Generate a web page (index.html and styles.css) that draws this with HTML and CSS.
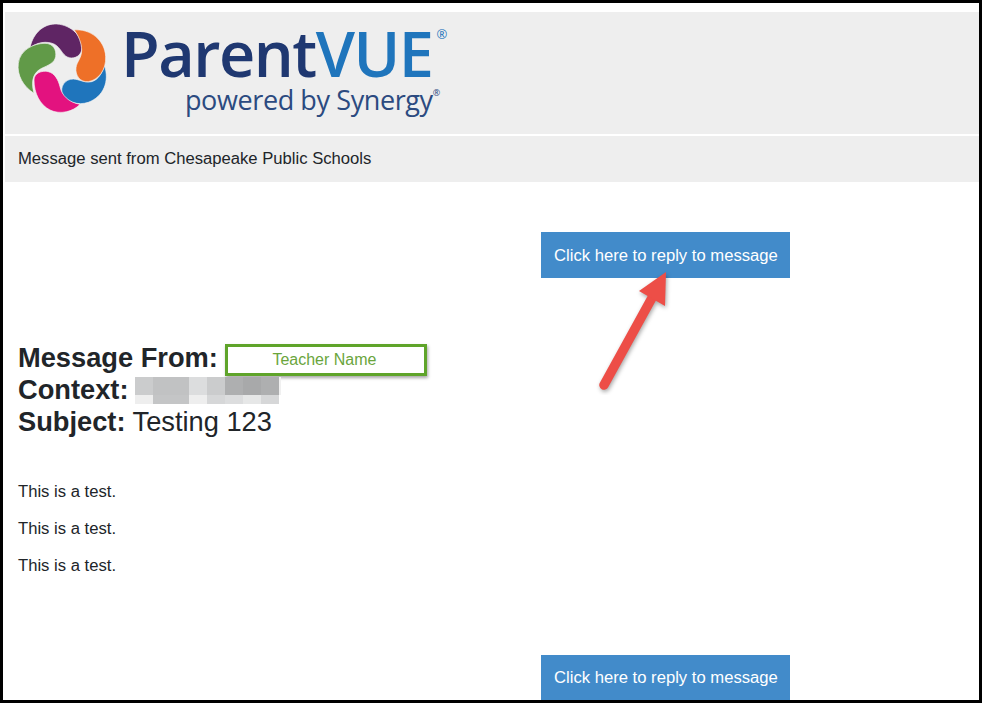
FILE: index.html
```html
<!DOCTYPE html>
<html lang="en">
<head>
    <meta charset="UTF-8">
    <title>ParentVUE Message</title>
    <link rel="stylesheet" href="styles.css">
</head>
<body>
    <div class="frame">
        <div class="logo-bar">
            <svg class="logo-mark" viewBox="0 0 330 315" width="110" height="105">
                <path class="petal" fill="#5f2564" d="M60 98 C70 50 105 25 140 27 C185 30 218 65 216 100 C214 122 195 132 178 128 C160 124 155 105 140 92 C125 80 90 75 60 98Z"/>
                <path class="petal" fill="#1f75bc" d="M283 150 C300 200 280 245 235 262 C205 272 170 262 158 240 C148 215 165 192 190 192 C205 192 225 205 245 200 C265 195 278 172 283 150Z"/>
                <path class="petal" fill="#ee7028" d="M192 45 C240 40 285 75 287 125 C289 165 265 195 235 200 C210 203 195 180 198 158 C200 140 215 130 215 105 C215 85 205 60 192 45Z"/>
                <path class="petal" fill="#e3127f" d="M72 195 C72 175 95 165 115 170 C135 175 145 195 150 215 C155 240 175 262 210 268 C190 290 150 300 120 285 C90 270 72 235 72 195Z"/>
                <path class="petal" fill="#619a48" d="M72 235 C40 215 20 180 25 145 C30 105 70 85 105 85 C130 85 140 105 137 125 C133 145 115 150 95 160 C75 170 60 190 72 235Z"/>
            </svg>
            <div class="logo-text">
                <div class="logo-name">Parent<span class="logo-vue">VUE</span><sup class="logo-reg">®</sup></div>
                <div class="logo-sub">powered by Synergy<sup class="logo-reg-small">®</sup></div>
            </div>
        </div>
        <div class="sent-bar">Message sent from Chesapeake Public Schools</div>

        <div class="reply-row reply-top">
            <a class="reply-btn" href="#">Click here to reply to message</a>
        </div>

        <div class="meta">
            <div class="meta-row">
                <b>Message From:</b>
                <span class="teacher-box">Teacher Name</span>
            </div>
            <div class="meta-row">
                <b>Context:</b>
                <div class="blur">
                    <i class="s1"></i><i class="s2"></i><i class="s2"></i><i class="s3"></i><i class="s1"></i><i class="s4"></i><i class="s5"></i><i class="s4"></i><i class="s6"></i>
                    <i class="s7"></i><i class="s8"></i><i class="s8"></i><i class="s7"></i><i class="s9"></i><i class="s3"></i><i class="s10"></i><i class="s9"></i><i class="s0"></i>
                </div>
            </div>
            <div class="meta-row"><b>Subject:</b> <span>Testing 123</span></div>
        </div>

        <div class="body-text">
            <p>This is a test.</p>
            <p>This is a test.</p>
            <p>This is a test.</p>
        </div>

        <div class="reply-row reply-bottom">
            <a class="reply-btn" href="#">Click here to reply to message</a>
        </div>

        <svg class="arrow" viewBox="0 0 90 130" width="90" height="130">
            <g class="arrow-shape">
                <path d="M17 120 L66 31" fill="none" stroke="#ed4e47" stroke-width="9.5" stroke-linecap="round"/>
                <path d="M79 7 L52 26 L78 41Z" fill="#ed4e47"/>
            </g>
        </svg>
    </div>
</body>
</html>
```
FILE: styles.css
```css
* {
    box-sizing: border-box;
}
html, body {
    margin: 0;
    height: 100%;
    overflow: hidden;
}
body {
    font-family: "Liberation Sans", Arial, sans-serif;
    font-size: 16.65px;
    color: #212529;
    background: #fff;
}
.frame {
    position: relative;
    width: 982px;
    height: 703px;
    border: 3px solid #000;
    padding: 9px 0 0 2px;
    overflow: hidden;
}
.logo-bar {
    display: flex;
    height: 122px;
    background: #eee;
    padding: 3px 0 0 5px;
}
.logo-mark {
    flex: none;
}
.petal {
    stroke: #f3f3f3;
    stroke-width: 2;
}
.logo-text {
    font-family: "Open Sans", sans-serif;
    margin-left: 1px;
    color: #1f3871;
}
.logo-name {
    font-size: 63px;
    font-weight: 600;
    line-height: 60px;
    margin-top: 8px;
    white-space: nowrap;
    letter-spacing: -1.5px;
}
.logo-vue {
    color: #1f75bc;
}
.logo-reg {
    font-size: 13px;
    font-weight: 400;
    line-height: 0;
    color: #1f75bc;
    vertical-align: 38px;
    margin-left: 4px;
    letter-spacing: 0;
}
.logo-sub {
    font-size: 27px;
    line-height: 30px;
    margin: 2px 0 0 64px;
    color: #2b4a80;
    white-space: nowrap;
    letter-spacing: -0.4px;
}
.logo-reg-small {
    font-size: 9px;
    line-height: 0;
    vertical-align: 14px;
}
.sent-bar {
    margin-top: 2px;
    height: 46px;
    background: #eee;
    padding: 0 13px;
    line-height: 45px;
}
.reply-row {
    padding-left: 536px;
}
.reply-top {
    margin-top: 50px;
}
.reply-bottom {
    margin-top: 77px;
}
.reply-btn {
    display: block;
    width: 249px;
    height: 46px;
    padding: 0 13px;
    line-height: 46px;
    background: #428bca;
    color: #fff;
    text-decoration: none;
    white-space: nowrap;
}
.reply-top .reply-btn {
    line-height: 47px;
}
.meta {
    margin-top: 64px;
    padding-left: 13px;
    font-size: 27.25px;
}
.meta-row {
    display: flex;
    align-items: center;
    gap: 7px;
    height: 32px;
    white-space: nowrap;
}
.teacher-box {
    flex: none;
    width: 202px;
    height: 32px;
    margin-top: 4px;
    padding-right: 3px;
    border: 3px solid #5fa42a;
    background: #fff;
    color: #6aa53c;
    font-size: 16px;
    line-height: 26px;
    text-align: center;
    box-shadow: 1px 2px 3px rgba(0, 0, 0, 0.35);
}
.blur {
    display: grid;
    grid-template-columns: repeat(8, 18px) 2px;
    grid-template-rows: 18px 9px;
    margin: 1px 0 0 -1px;
}
.s0 { background: #fff; }
.s1 { background: #cbcccd; }
.s2 { background: #c1c2c3; }
.s3 { background: #dcddde; }
.s4 { background: #aeafb0; }
.s5 { background: #a8a9aa; }
.s6 { background: #f0f0f0; }
.s7 { background: #eeeeee; }
.s8 { background: #c4c5c6; }
.s9 { background: #d6d7d8; }
.s10 { background: #e6e7e7; }
.body-text {
    margin-top: 42px;
    padding-left: 13px;
}
.body-text p {
    margin: 0 0 13px;
    line-height: 24px;
}
.arrow {
    position: absolute;
    left: 584px;
    top: 262px;
}
.arrow-shape {
    filter: drop-shadow(1px 2px 2px rgba(0, 0, 0, 0.35));
}
```
